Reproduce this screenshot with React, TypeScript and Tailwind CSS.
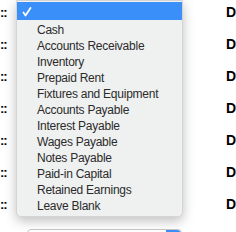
import React from 'react';

const options = [
  'Cash',
  'Accounts Receivable',
  'Inventory',
  'Prepaid Rent',
  'Fixtures and Equipment',
  'Accounts Payable',
  'Interest Payable',
  'Wages Payable',
  'Notes Payable',
  'Paid-in Capital',
  'Retained Earnings',
  'Leave Blank',
];

function Row({ labels = true }: { labels?: boolean }) {
  return (
    <div className="flex h-8 items-center">
      <span className="w-[27px] text-[13px] font-bold leading-none tracking-[-1px] text-black">{labels ? '::' : ''}</span>
      <div className="mt-[6px] flex h-[20px] w-[155px] rounded-[4px] border border-[#c8c8c8] bg-white">
        <div className="ml-auto h-full w-[15px] rounded-r-[4px] bg-[#3d8ef8]" />
      </div>
      {labels && <span className="ml-[45px] text-[14px] font-bold leading-none text-black">D</span>}
    </div>
  );
}

export default function App() {
  return (
    <div
      className="relative h-[232px] w-[236px] overflow-hidden bg-white"
      style={{ fontFamily: '"Liberation Sans", Arial, sans-serif' }}
    >
      {/* form rows behind the open menu */}
      <div className="mt-[-4px] flex flex-col">
        {Array.from({ length: 7 }).map((_, i) => (
          <Row key={i} />
        ))}
        <Row labels={false} />
      </div>

      {/* open select menu */}
      <div className="absolute left-[16px] top-0 h-[217px] w-[167px] rounded-b-[5px] border border-[#d4d4d4] bg-[#eff0f0] pt-[1px] shadow-[0_4px_12px_rgba(0,0,0,0.25)]">
        <div className="flex h-[18px] items-center bg-[#3b8ff9] pl-[5px]">
          <svg width="10" height="10" viewBox="0 0 10 10" className="mt-[1px]">
            <path d="M1.5 5.5 L3.5 8.5 L8.5 1" fill="none" stroke="white" strokeWidth="1.8" strokeLinecap="round" strokeLinejoin="round" />
          </svg>
        </div>
        <div className="flex flex-col pt-[2px]">
          {options.map((o) => (
            <div key={o} className="flex h-4 items-center pl-[20px] text-[12px] tracking-[-0.25px] text-[#2b2b2b]">
              {o}
            </div>
          ))}
        </div>
      </div>
    </div>
  );
}
